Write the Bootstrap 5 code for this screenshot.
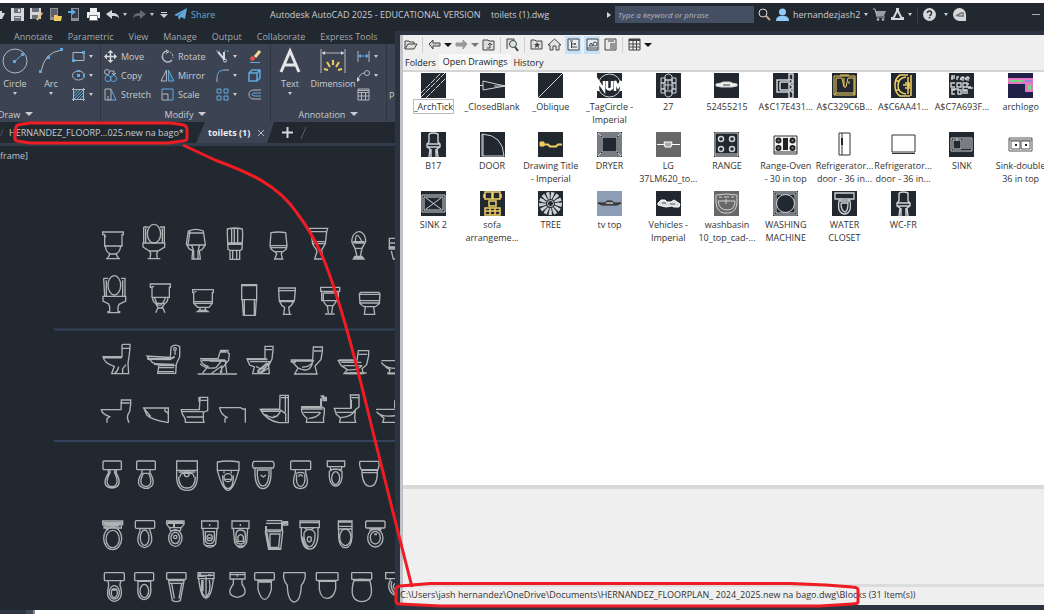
<!DOCTYPE html>
<html lang="en">
<head>
<meta charset="utf-8">
<meta name="viewport" content="width=device-width, initial-scale=1">
<title>Autodesk AutoCAD 2025 - toilets (1).dwg</title>
<link href="https://cdn.jsdelivr.net/npm/bootstrap@5.3.0/dist/css/bootstrap.min.css" rel="stylesheet">
<style>
:root{--ink:#222830;--panel:#3c4453;--edge:#2d3441;--txt:#c9ccd0;--blue:#5fa8dc;--gray:#b4b7bb}
body{font-family:"Open Sans","Noto Sans",sans-serif;font-size:9px;line-height:13px;background:#fff;color:var(--txt);overflow:hidden}
button,input{font:inherit;color:inherit;line-height:13px}
button{background:none;border:0;padding:0;white-space:nowrap}
svg{display:block;flex:none;fill:none;overflow:visible}
.app{background:var(--ink)}
.app-shell{min-height:100vh}
.ic{width:13px;height:13px}
.w{stroke:#d5d7da}.g{stroke:var(--gray)}.b{stroke:var(--blue)}.y{stroke:#efcf62}
.fw{fill:#d5d7da}.fb{fill:var(--blue)}.fy{fill:#f0cc60}
.car{display:block;flex:none;width:0;height:0;border:2px solid transparent;border-top:3px solid currentColor;border-bottom:0}
.car.big{border-width:4px 4px 0}
.titlebar{height:28px;padding-bottom:5px;margin-top:3px;background:var(--ink);overflow:hidden}
.tools{gap:6px;margin-left:-8px;width:278px}
.search{width:139px;height:17px;background:#454f63;border:0;border-radius:0;padding:0 3px;font-size:8px;font-style:italic;color:#c0c4cb}
.search::placeholder{color:#b2b7c0;opacity:1}
.workspace{display:grid;grid-template-columns:minmax(0,395fr) minmax(0,649fr);flex:1 1 auto}
.menu{height:13px;gap:15px;padding-left:14px}
.menu a{color:#a3a7ad;text-decoration:none;white-space:nowrap;line-height:11px}
.ribbon{display:grid;grid-template-columns:101fr 170fr 116fr 8fr;height:78px;background:var(--panel);overflow:hidden}
.pane{border-right:1px solid #2f3643;padding-top:3px;min-width:0}
.pane-body{height:58px}
.pane-title{height:17px;gap:5px;padding-top:1px}
.big-btn{display:flex;flex-direction:column;align-items:center;height:58px;gap:2px}
.big-btn svg{width:26px;height:28px}
.stack{display:grid;grid-template-rows:repeat(3,19px);align-items:center}
.stack button{display:flex;align-items:center;gap:4px;height:19px}
.modify{grid-template-columns:57px 55px 32px 1fr;padding-left:3px}
.filetabs{height:21px;overflow:hidden;white-space:nowrap}
.tab-on{background:var(--panel);height:21px;width:78px;padding-left:12px;gap:8px;clip-path:polygon(9px 0,100% 0,calc(100% - 7px) 100%,0 100%);font-weight:700;color:#eceef0}
.under{height:3px;background:#333c4b}
.model{position:relative;flex:1 1 auto;min-height:463px;overflow:hidden}
.model svg.plan{position:absolute;left:0;top:0;width:100%;height:463px}
.plan{stroke:#b0b3b6;stroke-width:4}
.plan .h{stroke-width:6}
.viewlabel{padding:3px 0 0;color:#c0c3c8}
.dialog-frame{background:#efefef;border:0 solid var(--edge);border-width:4px 0 5px 5px;color:#333;min-width:0}
.dialog-in{border-left:3px solid #bfc2c6;flex:1 1 auto;min-width:0}
.dlg-tools{height:19px;gap:5px;padding-left:1px}
.dlg-tools .ic{stroke:#444;width:13px;height:13px}
.dlg-tools button{width:13px;height:18px;display:flex;align-items:center;justify-content:center}
.dlg-tools .drop{width:6px;margin:0 -1px;color:#111}
.dlg-tools .on{background:#c5e2f8;width:16px;margin:0 -1px}
.rule{width:1px;height:16px;background:#cfcfcf;flex:none}
.dlg-tabs{height:16px}
.dlg-tabs button{padding:0 3px 0 2px;height:16px;color:#222}
.dlg-tabs .active{background:#f8f8f8;padding:0 4px 2px 4px}
.blocks{background:#fff;border-top:2px solid #d4d4d4;flex:1 1 auto;overflow:hidden}
.block-grid{display:grid;grid-template-columns:repeat(11,minmax(0,1fr));grid-auto-rows:minmax(59px,auto);width:calc(100% + 6px);list-style:none;margin:0;padding:1px 0 0 1px}
.block-grid li{display:flex;flex-direction:column;align-items:center;text-align:center;gap:2px;white-space:nowrap;color:#333}
.block-grid svg{width:25px;height:25px;background:var(--ink);stroke:#cfd2d5;stroke-width:1;overflow:hidden}
.block-grid .chosen{outline:1px solid #bbb}
.desc{height:102px;border-top:4px solid #d9d9d9;background:#efefef;border-bottom:3px solid #dcdcdc}
.status{height:18px;padding-top:1px;white-space:nowrap;overflow:hidden;margin-left:-3px}
.foot{height:4px;background:#fff}
.foot i{display:block;height:4px}
.marks{position:absolute;inset:0;width:100%;height:100%;pointer-events:none;stroke:#ee1c24;stroke-width:3;stroke-linejoin:round}
</style>
</head>
<body>
<div class="app-shell position-relative d-flex flex-column">
<header class="titlebar d-flex align-items-center">
  <div class="tools d-flex align-items-center flex-shrink-0">
    <button aria-label="Open"><svg class="ic" viewBox="0 0 13 13"><path class="fw" d="M1 3h9v2h3l-3 6H1z"/></svg></button>
    <button aria-label="Save"><svg class="ic" viewBox="0 0 13 13"><path class="fw" d="M0 0h13v13H0z"/><path fill="#6b7078" d="M3 0h7v5H3zM3 8h7v5H3z"/><path class="fw" d="M7 1h2v3H7zM4 9h5v1H4z"/></svg></button>
    <button aria-label="Save as"><svg class="ic" viewBox="0 0 13 13"><path class="fw" d="M0 0h11v11H0z"/><path fill="#6b7078" d="M2 0h7v4H2zM2 7h6v4H2z"/><path stroke="#e6c36a" stroke-width="2" d="M12 5 7 12"/><path stroke="#d05050" d="M12 4l1 1"/></svg></button>
    <button aria-label="Open from mobile"><svg class="ic" viewBox="0 0 13 13"><path fill="#8c9096" d="M1 0h8v12H1z"/><path fill="#5b6068" d="M2 1h6v8H2z"/><path class="fy" d="M5 7h3l1 1h4l-1 5H5z"/></svg></button>
    <button aria-label="Save to mobile"><svg class="ic" viewBox="0 0 13 13"><path fill="#8c9096" d="M3 0h8v13H3z"/><path fill="#343c49" d="M4 1h6v9H4z"/><path class="fb" d="M0 3h4V1l4 3-4 3V5H0z"/></svg></button>
    <button aria-label="Plot"><svg class="ic" viewBox="0 0 13 13"><path fill="#eceef0" d="M3 0h7v4H3zM0 4h13v6H0z"/><path fill="#fff" stroke="#777" d="M2.500 7.500h8v5h-8z"/></svg></button>
    <button class="d-flex align-items-center gap-1" aria-label="Undo"><svg class="ic" viewBox="0 0 13 13"><path class="fw" d="M0 6l6-4v3c4 0 7 1 7 6-1-3-3-3-7-3v3z"/></svg><i class="car"></i></button>
    <button class="d-flex align-items-center gap-1" aria-label="Redo"><svg class="ic" viewBox="0 0 13 13"><path fill="#646a74" d="M13 6L7 2v3C3 5 0 6 0 11c1-3 3-3 7-3v3z"/></svg><i class="car"></i></button>
    <button class="d-flex flex-column align-items-center" aria-label="Customize" style="gap:1px"><svg width="6" height="1"><path class="fw" d="M0 0h6v1H0z"/></svg><i class="car big"></i></button>
    <button class="d-flex align-items-center gap-1" style="color:#5fa8dc"><svg class="ic" viewBox="0 0 13 13"><path class="fb" d="M0 7L13 0l-2 11-4-2-2 3-1-4 6-5-7 5z"/></svg>Share</button>
  </div>
  <div class="flex-grow-1 text-nowrap"><span class="me-2">Autodesk AutoCAD 2025 - EDUCATIONAL VERSION</span> <span>toilets (1).dwg</span></div>
  <svg width="4" height="6" class="me-1"><path class="fw" d="M0 0l4 3-4 3z"/></svg>
  <input class="search me-1" type="search" aria-label="Search" placeholder="Type a keyword or phrase">
  <div class="d-flex align-items-center flex-shrink-0" style="width:286px;gap:5px">
    <button aria-label="Find"><svg class="ic" viewBox="0 0 13 13"><circle class="w" cx="5" cy="5" r="4"/><path stroke="#c8a684" stroke-width="2" d="M8 8l4 4"/></svg></button>
    <button class="d-flex align-items-center gap-1"><svg class="ic" viewBox="0 0 13 13"><circle fill="#8ecbf5" cx="6.500" cy="4" r="3.500"/><path fill="#8ecbf5" d="M0 13q0-5 5-5h3q5 0 5 5z"/></svg>hernandezjash2<i class="car"></i></button>
    <button aria-label="Store"><svg class="ic" viewBox="0 0 13 13"><path fill="#9a9da2" d="M2 3h11l-2 5H4z"/><path class="g" d="M0 1h2l2 8h8"/><circle fill="#b4b7bb" cx="5" cy="11.500" r="1.300"/><circle fill="#b4b7bb" cx="10" cy="11.500" r="1.300"/></svg></button>
    <button class="d-flex align-items-center gap-1" aria-label="Autodesk apps"><svg class="ic" viewBox="0 0 13 13"><path class="w" stroke-width="2" d="M6.500 2L2 11h9z"/><path class="fw" d="M5 0h3v3H5zM0 9h3v3H0zM10 9h3v3h-3z"/></svg><i class="car"></i></button>
    <span class="rule" style="background:#3a414d"></span>
    <button class="d-flex align-items-center gap-2" aria-label="Help"><svg class="ic" viewBox="0 0 13 13"><circle class="fw" cx="6.500" cy="6.500" r="6.500"/><path stroke="#333" stroke-width="1.500" d="M4.500 5q0-2 2-2t2 2-2 3M6.500 9v1.500"/></svg><i class="car"></i></button>
    <button aria-label="Assistant"><svg class="ic" viewBox="0 0 13 13"><path class="fw" d="M6.500 0a6.500 6.500 0 1 0 0 13H13V6.500A6.500 6.500 0 0 0 6.500 0z"/><path stroke="#777" stroke-width="1.500" d="M3 8l5-3h2v4M5 8h5"/></svg></button>
    <button class="ms-auto me-1" aria-label="Minimize"><svg width="8" height="2"><path fill="#a9acb1" d="M0 0h8v1H0z"/></svg></button>
  </div>
</header>

<main class="workspace app">
<section class="d-flex flex-column" style="min-width:0">
  <nav class="menu d-flex"><a href="#">Annotate</a><a href="#">Parametric</a><a href="#">View</a><a href="#">Manage</a><a href="#">Output</a><a href="#">Collaborate</a><a href="#">Express Tools</a></nav>
  <div class="ribbon">
    <div class="pane">
      <div class="pane-body d-flex">
        <button class="big-btn" style="width:30px"><svg viewBox="0 0 26 28"><circle class="g" cx="13" cy="14" r="12"/><path class="b" d="M13 14l7-6"/><path class="fb" d="M11 13h3v3h-3zM19 6h3v3h-3z"/></svg>Circle<i class="car"></i></button>
        <button class="big-btn" style="width:42px"><svg viewBox="0 0 26 28"><path class="g" d="M3 25Q6 5 24 3"/><path class="fb" d="M1 23h3v3H1zM22 1h3v3h-3zM9 9h3v3H9z"/></svg>Arc<i class="car"></i></button>
        <div class="stack">
          <button aria-label="Rectangle"><svg class="ic" viewBox="0 0 13 13"><path class="g" d="M1 2.500h11v8H1z"/><path class="fb" d="M0 9h3v3H0zM10 1h3v3h-3z"/></svg><i class="car"></i></button>
          <button aria-label="Ellipse"><svg class="ic" viewBox="0 0 13 13"><ellipse class="g" cx="6.500" cy="6.500" rx="6" ry="4.500"/><path class="fb" d="M5 5h3v3H5zM11 5h2v3h-2zM5 1h3v2H5z"/></svg><i class="car"></i></button>
          <button aria-label="Hatch"><svg class="ic" viewBox="0 0 13 13"><path class="g" d="M1.500 0v13M11.500 0v13M0 1.500h13M0 11.500h13"/><path class="b" d="M2 5l3-3M2 8l6-6M2 11l9-9M5 11l6-6M8 11l3-3"/></svg><i class="car"></i></button>
        </div>
      </div>
      <div class="pane-title d-flex align-items-center" style="margin-left:-2px">Draw <i class="car big"></i></div>
    </div>
    <div class="pane">
      <div class="pane-body stack modify">
        <button><svg class="ic" viewBox="0 0 13 13"><path class="w" stroke-width="1.500" d="M6.500 1v11M1 6.500h11"/><path class="fw" d="M6.500 0l3 3h-6zM6.500 13l3-3h-6zM0 6.500l3-3v6zM13 6.500l-3-3v6z"/></svg>Move</button>
        <button><svg class="ic" viewBox="0 0 13 13"><path class="g" stroke-width="1.500" d="M11 10A5.500 5.500 0 1 1 6 1"/><path class="w" d="M5 0l3 1.500-3 2"/><path class="g" d="M9 2a6 6 0 0 1 3 6" stroke-dasharray="2 1"/></svg>Rotate</button>
        <button aria-label="Trim"><svg class="ic" viewBox="0 0 13 13"><path class="b" d="M0 1h4M8 1h5" stroke-dasharray="2 1"/><path class="w" stroke-width="2" d="M2 2l6 7M8 2v8"/><circle class="w" cx="9" cy="10.500" r="1.500"/></svg><i class="car"></i></button>
        <button aria-label="Erase"><svg class="ic" viewBox="0 0 13 13"><path stroke="#f3dc97" stroke-width="3" d="M12 1L7 7"/><path stroke="#e0544a" stroke-width="4" d="M6 7l-3 3"/><path class="b" d="M2 12.500h10"/></svg></button>
        <button><svg class="ic" viewBox="0 0 13 13"><circle class="g" cx="3" cy="3" r="2.500"/><path class="g" d="M6 2h4v4M8 4l2 2 2-2"/><circle class="b" cx="4" cy="9.500" r="3"/><circle class="b" cx="9.500" cy="9.500" r="3"/></svg>Copy</button>
        <button><svg class="ic" viewBox="0 0 13 13"><path class="g" d="M5.500 1v11H0z"/><path class="b" fill="#34607f" d="M7.500 1v11H13z"/></svg>Mirror</button>
        <button aria-label="Fillet"><svg class="ic" viewBox="0 0 13 13"><path class="g" d="M1 13V9M8 1h5"/><path class="b" d="M1 9q0-8 7-8"/></svg><i class="car"></i></button>
        <button aria-label="Explode"><svg class="ic" viewBox="0 0 13 13"><path class="b" stroke-width="1.500" d="M1 4h8v8H1zM1 4l3-3h8v8l-3 3M9 4l3-3"/></svg></button>
        <button><svg class="ic" viewBox="0 0 13 13"><path class="g" d="M1 1h6v11H1zM4 8v4"/><path class="b" d="M7 1l5 11H5"/></svg>Stretch</button>
        <button><svg class="ic" viewBox="0 0 13 13"><path class="b" d="M1 6V1h11v11H7"/><path class="g" d="M1 6h6v6H1z"/></svg>Scale</button>
        <button aria-label="Array"><svg class="ic" viewBox="0 0 13 13"><path class="b" d="M1 1h4v4H1zM8 1h4v4H8zM1 8h4v4H1z"/><path class="b" d="M8 8h4v4H8z"/></svg><i class="car"></i></button>
        <button aria-label="Offset"><svg class="ic" viewBox="0 0 13 13"><path class="g" d="M13 2H6Q1 2 1 6.500T6 11h7"/><path class="b" d="M13 5H7Q4 5 4 6.500T7 8h6"/></svg></button>
      </div>
      <div class="pane-title d-flex align-items-center justify-content-center">Modify <i class="car big"></i></div>
    </div>
    <div class="pane">
      <div class="pane-body d-flex">
        <button class="big-btn" style="width:38px"><svg viewBox="0 0 26 28"><path stroke="#e4e6e8" stroke-width="3" d="M4 25L13 4l9 21M7 18h12"/></svg>Text<i class="car"></i></button>
        <button class="big-btn" style="width:48px"><svg viewBox="0 0 26 28"><path class="g" d="M1 2v24M25 2v24M2 6h22"/><path class="fw" d="M2 6l3-2v4zM24 6l-3-2v4z"/><path stroke="#f0cc60" stroke-width="2" d="M13 13v5M7 15l3 5M19 15l-3 5M4 22l4 1M22 22l-4 1"/></svg>Dimension</button>
        <div class="stack">
          <button aria-label="Linear"><svg class="ic" viewBox="0 0 13 13"><path class="g" d="M1 1v11M12 1v11"/><path class="b" d="M1 6h11"/><path class="fb" d="M1 6l3-2v4zM12 6L9 4v4z"/></svg><i class="car"></i></button>
          <button aria-label="Leader"><svg class="ic" viewBox="0 0 13 13"><path class="g" d="M1 12Q2 4 8 4"/><circle class="g" cx="10" cy="4" r="2.500"/><path class="fw" d="M0 13V8l3 3z"/></svg><i class="car"></i></button>
          <button aria-label="Table"><svg class="ic" viewBox="0 0 13 13"><path class="g" d="M1 1h11v11H1zM1 2.500h11M1 4.500h11M1 8h11M4.500 4v8M8.500 4v8"/></svg></button>
        </div>
      </div>
      <div class="pane-title d-flex align-items-center justify-content-center">Annotation <i class="car big"></i></div>
    </div>
    <div class="d-flex align-items-center pt-4" style="padding-left:2px"><span>P</span></div>
  </div>
  <div class="filetabs d-flex align-items-center">
    <span style="width:9px;color:#59616d">/</span>
    <button class="text-start" style="width:187px">HERNANDEZ_FLOORP...025.new na bago*</button>
    <button class="tab-on d-flex align-items-center">toilets (1) <svg width="6" height="6" viewBox="0 0 6 6"><path class="g" d="M0 0l6 6M6 0L0 6"/></svg></button>
    <button class="ms-2" aria-label="New drawing"><svg width="11" height="11" viewBox="0 0 11 11"><path class="w" stroke-width="2" d="M5.500 0v11M0 5.500h11"/></svg></button>
    <svg class="ms-2" width="5" height="12"><path stroke="#59616d" d="M5 0L0 12"/></svg>
  </div>
  <div class="under"></div>
  <div class="model">
    <div class="viewlabel">frame]</div>
    <svg class="plan" viewBox="0 146 395 463" preserveAspectRatio="xMinYMin slice" role="img" aria-label="Toilet blocks in front, side and top view">
      <path d="M54 329.500H395M54 441H395" stroke="#35435a" stroke-width="2"/>
      <svg x="50" y="215" width="350" height="110" viewBox="0 0 1050 330">
        <path d="M158 51h62v8h-4v34h-52V59h-6zM163 64h6M166 93q2 18 12 22v6l-6 10M212 93q-2 18-12 22v6l6 10M168 131h42M176 117h26"/>
        <path d="M281 36h14M330 36h13v48M281 36v48M287 40v44M337 40v44M279 84h65v12l-20 12h-26l-19-12zM298 108l4 8-2 14M324 108l-4 8 2 14M293 131h38"/><ellipse cx="312" cy="56" rx="20" ry="28"/>
        <path d="M415 48q22-10 45 0l6 42-10 14-8 3 3 25h-25l2-25-11-6-8-14zM414 54h47M411 90h55M425 90l6 18v24M449 90l-5 18v24M420 48l-6 42"/>
        <path d="M532 42q22-6 45 0l1 15-2 46-5 3H540l-6-3-2-46zM545 40v44M563 40v44M553 40v44M532 84h45M534 88h43M540 104v29h29v-29M548 104v28M560 104v28"/><path class="h" d="M536 87h38"/>
        <path d="M663 53q22-4 44 0l4 39-2 10-10 8H673l-10-8-3-10zM660 92h50M661 98h49M676 110l4 8-6 14h24l-4-14 2-8"/>
        <path d="M779 40h54l-3 10h-49zM783 50l5 38 10 14 3 8-7 22h25l-4-27 11-19 4-36M786 80h40M788 86h36"/>
        <path d="M905 80q2-22 12-26 9-8 20 0 10 8 10 26l-11 20-5 24M905 80l10 20 6 24M908 80h36M913 84h28M916 100h20M910 132h32l-6-8h-22zM916 78q2-34 19 0" /><path class="h" d="M910 81h32M913 129h26"/>
        <path d="M1018 70h20v26h-20zM1020 84h18M1016 97h22M1016 102h22M1024 108l6 24h10"/><path class="h" d="M1016 98h20"/>
        <path d="M161 190h14M213 190h12v54M161 190l3 54M169 196v48M218 196v48M159 244h68v14l-20 10-3 8v14h5v3h-35v-3h5v-15l-3-8-17-9z"/><ellipse cx="193" cy="211" rx="19" ry="29"/>
        <path d="M301 207h60v10h-3v30h-52v-30h-5zM305 215h7M307 247q2 14 10 18l8 14h10l10-14q8-4 9-18M314 249q14 44 32 0M325 275l-8 18M337 275l8 18M316 265h28"/>
        <path d="M428 224h62v9h-3v32l-10 12H443l-12-12v-32h-3zM431 260h56M431 265h56M433 230h6M450 278v6l-8 6h32l-8-6v-6"/><path class="h" d="M446 287h24"/>
        <path d="M575 209h45v45h-45zM577 254h42l-3 47h-36zM575 212h45M583 254v45M613 254v45"/>
        <path d="M686 219h50v8l-3 30-10 15-7 5 3 21h-18l3-21-8-5-8-14-2-31zM689 257h44M689 260h44M687 227h49M698 298h26"/>
        <path d="M812 217h57v12h-57zM815 229v28h50v-28M820 234h40v23M820 234v23M820 260l10 12h20l10-15M832 272l3 22M848 272l-3 22M825 297h29"/>
        <path d="M931 232h56l3 6-2 28-12 9H942l-12-9-2-28zM928 257h62M928 264h62M946 276l-3 22h31l-3-22M928 238h62"/>
      </svg>
      <svg x="50" y="325" width="350" height="120" viewBox="0 0 1050 360">
        <path d="M216 60l4-2h20v11l-3 26-3 20 2 31h-51l8-22q-30-8-34-29h57zM216 70h24M214 98h-52M206 125q-2 14-12 20M218 145v-14l10-12"/><path class="h" d="M160 97h56"/>
        <path d="M361 97l2-30q12-12 26-2v30l-10 22-2 28h-54l4-24-20-9-16-19zM292 100h70M330 122h46M328 128h44M322 140h50M375 76v14"/><path class="h" d="M292 102l68 1 14-8M312 117l60 2"/><circle cx="375" cy="72" r="4"/>
        <path d="M450 101h54l8-25h22v8l4 2-2 20-20 24-6 14M452 104q2 14 22 20l-16 20M450 116q20 18 48 12l16-20M443 147h118M480 108h50M485 145l30-22v20M526 110l4 34"/><path class="h" d="M510 80h20M456 106h70"/>
        <path d="M645 64h24v10l-3 28-10 20 2 24h-50l5-20-14-6-8-18h54zM645 74h21M600 110h60M618 124q26 20 42-16M622 144q24-4 30-30M634 144l22-16"/><path class="h" d="M592 103h60M622 140l30-26"/>
        <path d="M790 66h27v13l-4 24-18 20 6 24h-67l10-18-20-22v-2h64zM792 78h22M730 108h60q-10 20-34 18M742 128q40 20 46-18M724 103v8h14"/>
        <path d="M925 77h31v14l-6 28-14 12 4 15h-58l10-12-18-12-9-15h56zM926 88h26M874 112h60M880 122h56M892 134q30 4 44-12M900 144h50"/><path class="h" d="M866 106h54M888 145h48"/>
        <path d="M994 107h44M994 112q10 18 44 18M1006 126l14 8-4 12h22"/><path class="h" d="M1012 145h24"/>
        <path d="M171 293v-12l8-6q-24-8-25-21h59l1-29h28v13l-3 22q-12 14-2 33M211 234h28" />
        <path d="M355 293q-50-8-64-22l-10-22h74v22M345 249v10q10 2 10 10v24M282 251q12 12 20 24"/>
        <path d="M450 217h23v40l-13 5v22l2 8h-56v-8l-4-10q-6-4-8-20h54zM452 226h20M396 260h64M410 276h48"/><path class="h" d="M448 216v14"/>
        <path d="M525 293v-13l6-3q-19-8-22-29h63l6 4h8v41"/>
        <path d="M690 211h25v82h-28q-40-8-56-40h58zM693 218h20M634 259h56q-6 20-20 14M645 268q30 24 48-12l14 10v24M706 212v50"/><path class="h" d="M632 254h56"/>
        <path d="M755 245h60l8 5v16q-4 12-2 26h-52l2-12q-20-14-16-35zM756 252h62M760 262h50M776 280q26-2 36-18"/><path class="h" d="M755 247h60M813 244v-24M812 214h8v12h8v-8h-12"/>
        <path d="M901 210h26v36l-11 8-2 26 3 12h-48l2-14-12-10-6-18h50zM904 218h24M860 262h54M872 278q34-2 42-22"/><path class="h" d="M903 250v-26"/>
        <path d="M978 253h60M980 260q10 18 56 12M990 270l12 10-4 12h40M1034 226v24"/>
      </svg>
      <svg x="50" y="440" width="350" height="174" viewBox="0 0 1050 522">
        <rect x="159" y="63" width="55" height="26" rx="3"/><path d="M174 90l2 8q-26 42 10 46 36-4 12-46l2-8M180 90v8q-20 38 6 42 26-4 8-42v-8"/>
        <rect x="260" y="63" width="56" height="26" rx="3"/><path d="M276 90v8q-26 42 12 47 36-5 12-47v-8M280 100q-18 36 8 40 24-4 8-40zM280 145h18"/>
        <path d="M380 63h62v50q-2 38-31 38t-31-38zM380 91h62M386 96h50M386 110q0 34 25 34t25-34M390 112q0-12 10-12h22q10 0 10 12"/><circle cx="410" cy="103" r="7"/>
        <path d="M502 66q32-6 65 0v25h-65zM502 91q16 60 32 60t32-60M518 106q0 40 16 40t16-40M522 94v6M544 94v6"/><circle cx="534" cy="113" r="12"/><path d="M523 118h22"/>
        <path d="M612 64h56q8 8 2 20h-60q-6-12 2-20zM615 84v20q2 40 24 42 22-2 24-42V84M622 90h35v16q-4 32-18 32t-17-32zM632 105l8 6 8-6"/>
        <rect x="722" y="63" width="60" height="26" rx="3"/><path d="M736 90v9q-16 44 15 47 32-3 16-47v-9M738 101q14-8 26 0M740 104q-4 32 12 36 16-4 12-36M746 110q4-12 12 0"/>
        <path d="M832 63h52v17h-52zM840 80l2 8h32l2-8M838 94q18-14 38 0v18q-4 26-19 26t-19-26z"/><ellipse cx="857" cy="114" rx="12" ry="19"/>
        <path d="M930 64h56q4 12-2 25h-50q-8-13-4-25zM936 91h46v10q-2 38-22 38t-24-38zM936 98h46"/>
        <path d="M158 243h60v11h-60zM162 254v12M214 254v12M158 248h60M164 264h50M168 258h40"/><ellipse cx="188" cy="295" rx="27" ry="34"/><ellipse cx="188" cy="297" rx="20" ry="26"/><path class="h" d="M162 252h52M164 258l10 12"/>
        <rect x="256" y="242" width="58" height="23" rx="3"/><path d="M270 265v8q-18 42 14 50 32-8 16-50v-8M272 266h28"/><ellipse cx="284" cy="293" rx="13" ry="23"/>
        <path d="M350 243h52v10l-8 10h-36l-8-10zM350 250h52M360 263v8M392 263v8M360 272h32"/><ellipse cx="376" cy="294" rx="20" ry="25"/><ellipse cx="376" cy="294" rx="13" ry="17"/><circle cx="376" cy="291" r="5"/><path class="h" d="M372 252v10M353 246h46"/>
        <path d="M455 243h49v22h-49zM459 265l3 47q18 20 35 0l4-47M466 275h27v24q-2 12-14 12t-13-12z"/><ellipse cx="479" cy="293" rx="8" ry="9"/><path d="M474 294h10M479 252v6M466 317h27"/>
        <path d="M546 243h51v22h-51zM550 265l4 42q18 32 36 0l3-42M558 284q0-14 14-14t14 14v14q0 14-14 14t-14-14zM564 290q8-12 16 0v14h-16zM571 252v6M560 318h24"/>
        <path d="M650 242h45v28h-45l-4 6 10 52h36l6-52-2-26M648 250h48M648 270h48M652 275h42M660 282v40h26l4-40zM700 245h13v10h-13z"/><path class="h" d="M650 277l8 49h34M696 249h18M648 258v18"/>
        <path d="M750 243h58v20h-58zM754 263v26q4 38 25 38t25-38v-26M750 248h58M764 264q12 10 28 0M762 280q4-12 16-12t17 12v12q-4 28-16 28t-17-28z"/><ellipse cx="778" cy="298" rx="6" ry="8"/><path class="h" d="M757 290q4 30 18 36"/>
        <path d="M865 243h41v24h-41zM865 246h41M866 259h41M866 267v24q2 32 20 32t20-32v-24"/><ellipse cx="886" cy="292" rx="17" ry="25"/>
        <rect x="947" y="243" width="58" height="21" rx="3"/><path d="M960 264v8M992 264v8"/><ellipse cx="976" cy="294" rx="23" ry="27"/><ellipse cx="976" cy="293" rx="15" ry="19"/><path class="h" d="M973 283h8M963 268h27"/>
        <rect x="163" y="398" width="60" height="24" rx="3"/><path d="M174 422q4 12 0 24-6 34 19 38 26-4 20-38-6-12 0-24"/><ellipse cx="193" cy="457" rx="15" ry="20"/><ellipse cx="193" cy="459" rx="9" ry="13"/><path class="h" d="M185 449h17"/>
        <rect x="254" y="398" width="57" height="24" rx="3"/><path d="M264 422v18q-4 36 18 39 24-3 20-39v-18M264 424h38"/><ellipse cx="283" cy="453" rx="13" ry="20"/>
        <rect x="350" y="398" width="58" height="20" rx="2"/><path d="M355 418l12 64q12 6 24 0l12-64M355 422h48M359 430h40M365 430l8 46M395 430l-8 46"/>
        <path d="M444 398h48v18h-48zM446 416q6 58 22 58t22-58M468 406v72M456 420q-6 36 8 50M478 420q6 36-8 50M444 406h48"/><path class="h" d="M450 400v10M474 406h10M458 420v34M444 408h20"/>
        <path d="M540 398h45v19h-45zM540 404h45M550 417v15q-26 34 12 40 38-6 14-40v-15M562 402v8M553 404h8"/>
        <rect x="614" y="398" width="59" height="22" rx="3"/><path d="M624 420v6h40v-6M624 426v22q8 30 20 30t20-30v-22"/><path class="h" d="M625 423h38"/>
        <path d="M702 398h63q4 20-11 38-2 48-21 50-20-2-21-50-15-18-10-38z"/>
        <rect x="799" y="398" width="65" height="23" rx="2"/><path d="M808 421v26q4 28 23 28t26-28v-26M804 424h54"/>
        <rect x="905" y="398" width="60" height="20" rx="2"/><path d="M912 420q-18 62 23 65 42-3 24-65M910 422h52M926 418h16"/>
        <path d="M1038 398h-31v18h30M1022 418q-16 30 12 48M1038 428q-16 10 0 24M1026 424q-8 20 10 38"/>
      </svg>
    </svg>
  </div>
</section>

<section class="dialog-frame d-flex flex-column">
 <div class="dialog-in d-flex flex-column">
  <div class="dlg-tools d-flex align-items-center">
    <button aria-label="Load"><svg class="ic" viewBox="0 0 13 13"><path fill="#ddd" d="M1 11V3h4l1 1h4v2h3l-3 5zM1 11l3-5h6"/></svg></button><span class="rule"></span>
    <button aria-label="Back"><svg class="ic" viewBox="0 0 13 13"><path fill="#ccc" d="M1 6l4-4v3h7v3H5v3z"/></svg></button>
    <button class="drop" aria-label="Back list"><i class="car big"></i></button>
    <button aria-label="Forward"><svg class="ic" viewBox="0 0 13 13" style="stroke:#999"><path fill="#999" d="M12 6L8 2v3H1v3h7v3z"/></svg></button>
    <button class="drop" aria-label="Forward list" style="color:#777"><i class="car big"></i></button>
    <button aria-label="Up"><svg class="ic" viewBox="0 0 13 13"><path fill="#ddd" d="M1 12V2h5l1 1h5v9z"/><path d="M5 10h3V5M6 7l2-2 2 2"/></svg></button><span class="rule"></span>
    <button aria-label="Search"><svg class="ic" viewBox="0 0 13 13"><path fill="#ddd" d="M1 11V1h7v3"/><circle fill="#d8e4e4" cx="7" cy="6" r="3.500"/><path stroke-width="2" d="M9 9l3 4"/></svg></button><span class="rule"></span>
    <button aria-label="Favorites"><svg class="ic" viewBox="0 0 13 13"><path fill="#ddd" d="M1 11V2h4l1 1h6v8z"/><path fill="#444" stroke="none" d="M7 4l1 2h2L8.500 7.500 9 10 7 8.500 5 10l.5-2.500L4 6h2z"/></svg></button>
    <button aria-label="Home"><svg class="ic" viewBox="0 0 13 13"><path fill="#e4e4e4" d="M0 7l6.500-6L13 7h-2v5H8V8H5v4H2V7z"/></svg></button>
    <button class="on" aria-label="Tree view"><svg class="ic" viewBox="0 0 13 13"><path fill="#e5edf2" d="M1 1h11v11H1z"/><path d="M3 3h3M4.500 4v6M5 6h4M5 9h5M8 5v2"/></svg></button>
    <button class="on" aria-label="Preview"><svg class="ic" viewBox="0 0 13 13"><path fill="#e5edf2" d="M1 1h11v11H1z"/><path d="M3 8l2-3 2 3z"/><circle cx="9" cy="6" r="2"/><path d="M1 10h11"/></svg></button>
    <button aria-label="Description"><svg class="ic" viewBox="0 0 13 13"><path fill="#e8e8e8" d="M1 1h11v11H1z"/><path d="M4 3h6M6 6h5M6 8h5M6 10h5"/></svg></button><span class="rule"></span>
    <button aria-label="Views"><svg class="ic" viewBox="0 0 13 13"><path fill="#eee" d="M1 1h11v11H1z"/><path stroke-width="2" d="M1 2h11"/><path d="M1 6h11M1 9h11M5 3v9M8.500 3v9"/></svg></button>
    <button class="drop" aria-label="Views list"><i class="car big"></i></button>
  </div>
  <div class="dlg-tabs d-flex" role="tablist"><button role="tab">Folders</button><button class="active" role="tab" aria-selected="true">Open Drawings</button><button role="tab">History</button></div>
  <div class="blocks">
   <ul class="block-grid">
    <li><svg viewBox="0 0 25 25"><path d="M0 20L20 0M5 25L25 5M0 24L24 0" stroke-dasharray="6 1"/></svg><span class="chosen">_ArchTick</span></li>
    <li><svg viewBox="0 0 25 25"><path d="M0 12.500h3M25 13L3 8v9zM14 13h11"/></svg>_ClosedBlank</li>
    <li><svg viewBox="0 0 25 25"><path d="M0 25L25 0"/></svg>_Oblique</li>
    <li><svg viewBox="0 0 25 25"><circle cx="12.500" cy="12.500" r="11.500"/><path stroke="#fff" stroke-width="2.500" d="M1 18V8l6 9V8M10 8v7q2 3 5 0V8M18 18V8l3 6 3-6v10"/></svg>_TagCircle -<br>Imperial</li>
    <li><svg viewBox="0 0 25 25"><path d="M9 3q3-4 7 0v4H9zM9 18v4q3 4 7 0v-4M9 7h7v11H9zM5 5h4v5H5zM16 5h4v5h-4zM5 10h3v6H5zM17 10h3v6h-3zM5 16h4v4H5zM16 16h4v4h-4zM12 8v9M9 12h7"/></svg>27</li>
    <li><svg viewBox="0 0 25 25"><path fill="#f2f2f2" d="M2 11l5-1 2-1h7l2 1 5 1v2l-5 1H7l-5-1z"/><path stroke="#333" d="M9 12h7"/></svg>52455215</li>
    <li><svg viewBox="0 0 25 25"><path d="M16 1h4v24h-4zM20 1v24M4 7h12v12H4zM7 9h8M7 17h8M7 9v8M17 6l3 2-3 3 3 3-3 3 3 3" stroke-width="1.500"/></svg>A$C17E431...</li>
    <li><svg viewBox="0 0 25 25"><path class="y" d="M2 3h21v19H2zM4 5h6l2 9h2l2-9h6v15H4zM8 2h9M12 5v8M17 8v3M2 22l2-2M23 22l-2-2"/></svg>A$C329C6B...</li>
    <li><svg viewBox="0 0 25 25"><path class="y" d="M20 2v21M17 2H9Q4 5 4 12.500T9 23h10M15 4Q7 5 7 12.500T15 21M17 4v17M12 12h7M14 10h4v5h-4M5 8h3M5 17h3" stroke-width="1.500"/></svg>A$C6AA41...</li>
    <li><svg viewBox="0 0 25 25"><path d="M3 7V3h3M2 5h4M8 7V4h2M12 5h3q-1-2-3 0t3 2M17 5h3q-1-2-3 0t3 2M6 10H2v4h4M8 10h4v4H8zM14 17v-7h4v4h-4M20 11h-2v3h4M6 17H3v4h3M9 17h3v4H9zM14 21v-4h2v4M16 17h2v4M19 15h5M2 16h8" stroke-width="1.400"/></svg>A$C7A693F...</li>
    <li><svg viewBox="0 0 25 25" style="background:#202049"><path stroke="none" fill="#e774c8" d="M0 5h25v14h-8v-8H0z"/><path stroke="none" fill="#79d879" d="M1 7h14v2H1zM20 12h3v5h-3z"/><path stroke="none" fill="#8d88d8" d="M17 7h7v2h-7z"/></svg>archlogo</li>

    <li><svg viewBox="0 0 25 25"><path stroke-width="1.400" d="M8 2q4-2 9 0v8l2 2v3l-3 2 1 8M8 2v8l-2 2v3l3 2-1 8M6 12h13M6 15h13M10 17v8M15 17v8"/></svg>B17</li>
    <li><svg viewBox="0 0 25 25"><path d="M2 24V2Q23 3 24 24zM3 24V2"/></svg>DOOR</li>
    <li><svg viewBox="0 0 25 25"><path class="y" fill="#f0cc60" d="M2 10h4v4H2z"/><path class="y" stroke-width="2" d="M6 12.500h4l2 2h6l2-2h4"/></svg>Drawing Title<br>- Imperial</li>
    <li><svg viewBox="0 0 25 25"><path d="M1 1h23v23H1zM3 3h19v19H3zM5 5h15v15H5zM1 24l3-3M24 24l-3-3M1 1l3 3M24 1l-3 3"/></svg>DRYER</li>
    <li><svg viewBox="0 0 25 25" style="background:#686868"><path stroke="#fff" d="M1 12.500h8M16 12.500h8M8 10h8l-1 5H9z" fill="#aaa"/></svg>LG<br>37LM620_to...</li>
    <li><svg viewBox="0 0 25 25"><path d="M1 1h23v23H1zM1 22h23"/><g stroke-width="1.500"><circle cx="7" cy="7" r="2.500"/><circle cx="18" cy="7" r="2.500"/><circle cx="7" cy="17" r="2.500"/><circle cx="18" cy="17" r="2.500"/></g></svg>RANGE</li>
    <li><svg viewBox="0 0 25 25" style="background:#fff"><path stroke="#333" fill="#f4f4f4" d="M1 4h23v18H1zM1 20h23"/><path fill="#222" stroke="none" d="M10 6h5v12h-5z"/><g fill="#888" stroke="#222" stroke-width="2"><circle cx="5.500" cy="8.500" r="2"/><circle cx="19.500" cy="8.500" r="2"/><circle cx="5.500" cy="16" r="2"/><circle cx="19.500" cy="16" r="2"/></g></svg>Range-Oven<br>- 30 in top</li>
    <li><svg viewBox="0 0 25 25" style="background:#fff"><path stroke="#333" d="M7 1h11v22H7zM10 1v22"/><path stroke="#222" stroke-width="2" d="M10 6v7"/></svg>Refrigerator...<br>door - 36 in...</li>
    <li><svg viewBox="0 0 25 25" style="background:#fff"><path stroke="#333" d="M1 3h23v17H1zM1 21.500h23"/></svg>Refrigerator...<br>door - 36 in...</li>
    <li><svg viewBox="0 0 25 25"><path d="M2 6h21v13H2zM4 8h8v9H4zM13 8h9M13 10h9M13 12h9M13 14h9M13 16h9M8 6v3"/></svg>SINK</li>
    <li><svg viewBox="0 0 25 25" style="background:#fff"><path stroke="#555" d="M1 6h23v13H1zM3 9h9v8H3zM13 9h9v8h-9zM1 8h23"/><path stroke="none" fill="#222" d="M7 12h2v2H7zM17 12h2v2h-2z"/></svg><span>Sink-double<br>36 in top</span></li>

    <li><svg viewBox="0 0 25 25"><path d="M1 4h23v17H1zM3 6h19v13H3zM5 7l15 11M20 7L5 18"/></svg>SINK 2</li>
    <li><svg viewBox="0 0 25 25"><g stroke-width="1.500"><path class="y" d="M5 1h7v7H5zM13 1h7v7h-7zM9 10h7v5H9zM5 17h15v7H5zM10 17v7M15 17v7M5 20h15M4 3v4M21 3v4"/></g></svg>sofa<br>arrangeme...</li>
    <li><svg viewBox="0 0 25 25"><circle cx="12.500" cy="12.500" r="3"/><circle cx="12.500" cy="12.500" r="6.500" stroke-width="4" stroke-dasharray="2 1"/><circle cx="12.500" cy="12.500" r="9.500" stroke-width="4" stroke-dasharray="3 1.500"/></svg>TREE</li>
    <li><svg viewBox="0 0 25 25" style="background:#8d9db5"><path fill="#555" stroke="#222" d="M1 12h7l2-2h5l2 2h7l-4 2H5z"/><path stroke="#eee" d="M9 12h7"/></svg>tv top</li>
    <li><svg viewBox="0 0 25 25"><path fill="#ddd" stroke="#fff" d="M2 12l3-3h4l2 2h4l3-2 3 2 3 2-1 3h-5l-2-1-6 1-4-1-4-1z"/><path stroke="#555" d="M6 12h4M14 13h5"/></svg>Vehicles -<br>Imperial</li>
    <li><svg viewBox="0 0 25 25" style="background:#686868"><path d="M2 4q10-2 21 0v8q-1 9-8 10h-5q-7-1-8-10zM4 10h17q0 9-8 9T4 10M5 6h3M10 6h5M17 6h3M12 8v5"/></svg>washbasin<br>10_top_cad-...</li>
    <li><svg viewBox="0 0 25 25"><path d="M1 1h23v23H1zM3 3h19v19H3z"/><circle cx="12.500" cy="12.500" r="9"/></svg>WASHING<br>MACHINE</li>
    <li><svg viewBox="0 0 25 25"><path d="M3 2h19v6H3zM8 8v2h9V8M7 10h11q2 12-5 13h-1Q5 22 7 10zM9 12h7q0 8-3 9-4-1-4-9" stroke-width="1.300"/></svg>WATER<br>CLOSET</li>
    <li><svg viewBox="0 0 25 25"><path stroke-width="1.400" d="M8 2q4-2 9 0v8l2 2v3l-3 2 1 8M8 2v8l-2 2v3l3 2-1 8M6 12h13M6 15h13M10 17v8M15 17v8"/></svg>WC-FR</li>
   </ul>
  </div>
  <div class="desc"></div>
  <div class="status">C:\Users\jash hernandez\OneDrive\Documents\HERNANDEZ_FLOORPLAN_ 2024_2025.new na bago.dwg\Blocks (31 Item(s))</div>
 </div>
</section>
</main>
<div class="foot d-flex"><i style="width:26px;background:#2f3542"></i><i style="width:7px;background:#3f495c"></i><i style="width:2px;background:#888"></i></div>
<svg class="marks" viewBox="0 0 1044 614" preserveAspectRatio="none" aria-hidden="true">
  <path d="M20 124.500L30 123H170L184 125Q187 126 187 130V138Q187 141 182 141L168 143H30L17 141Q14 140 15 136L16 128Q16 125 20 124.500Z"/>
  <path d="M183 145L215 160C250 173 278 185 297 213C317 240 326 262 336 294C352 342 362 388 375 440L398 532L412 587"/>
  <path d="M400 586L430 583.500H790L826 585L852 587Q858 587 858 590V602Q858 604 852 604L820 606H440L400 604Q396 604 396 601V590Q396 586 400 586Z"/>
</svg>
</div>
<script src="https://cdn.jsdelivr.net/npm/bootstrap@5.3.0/dist/js/bootstrap.bundle.min.js"></script>
</body>
</html>
